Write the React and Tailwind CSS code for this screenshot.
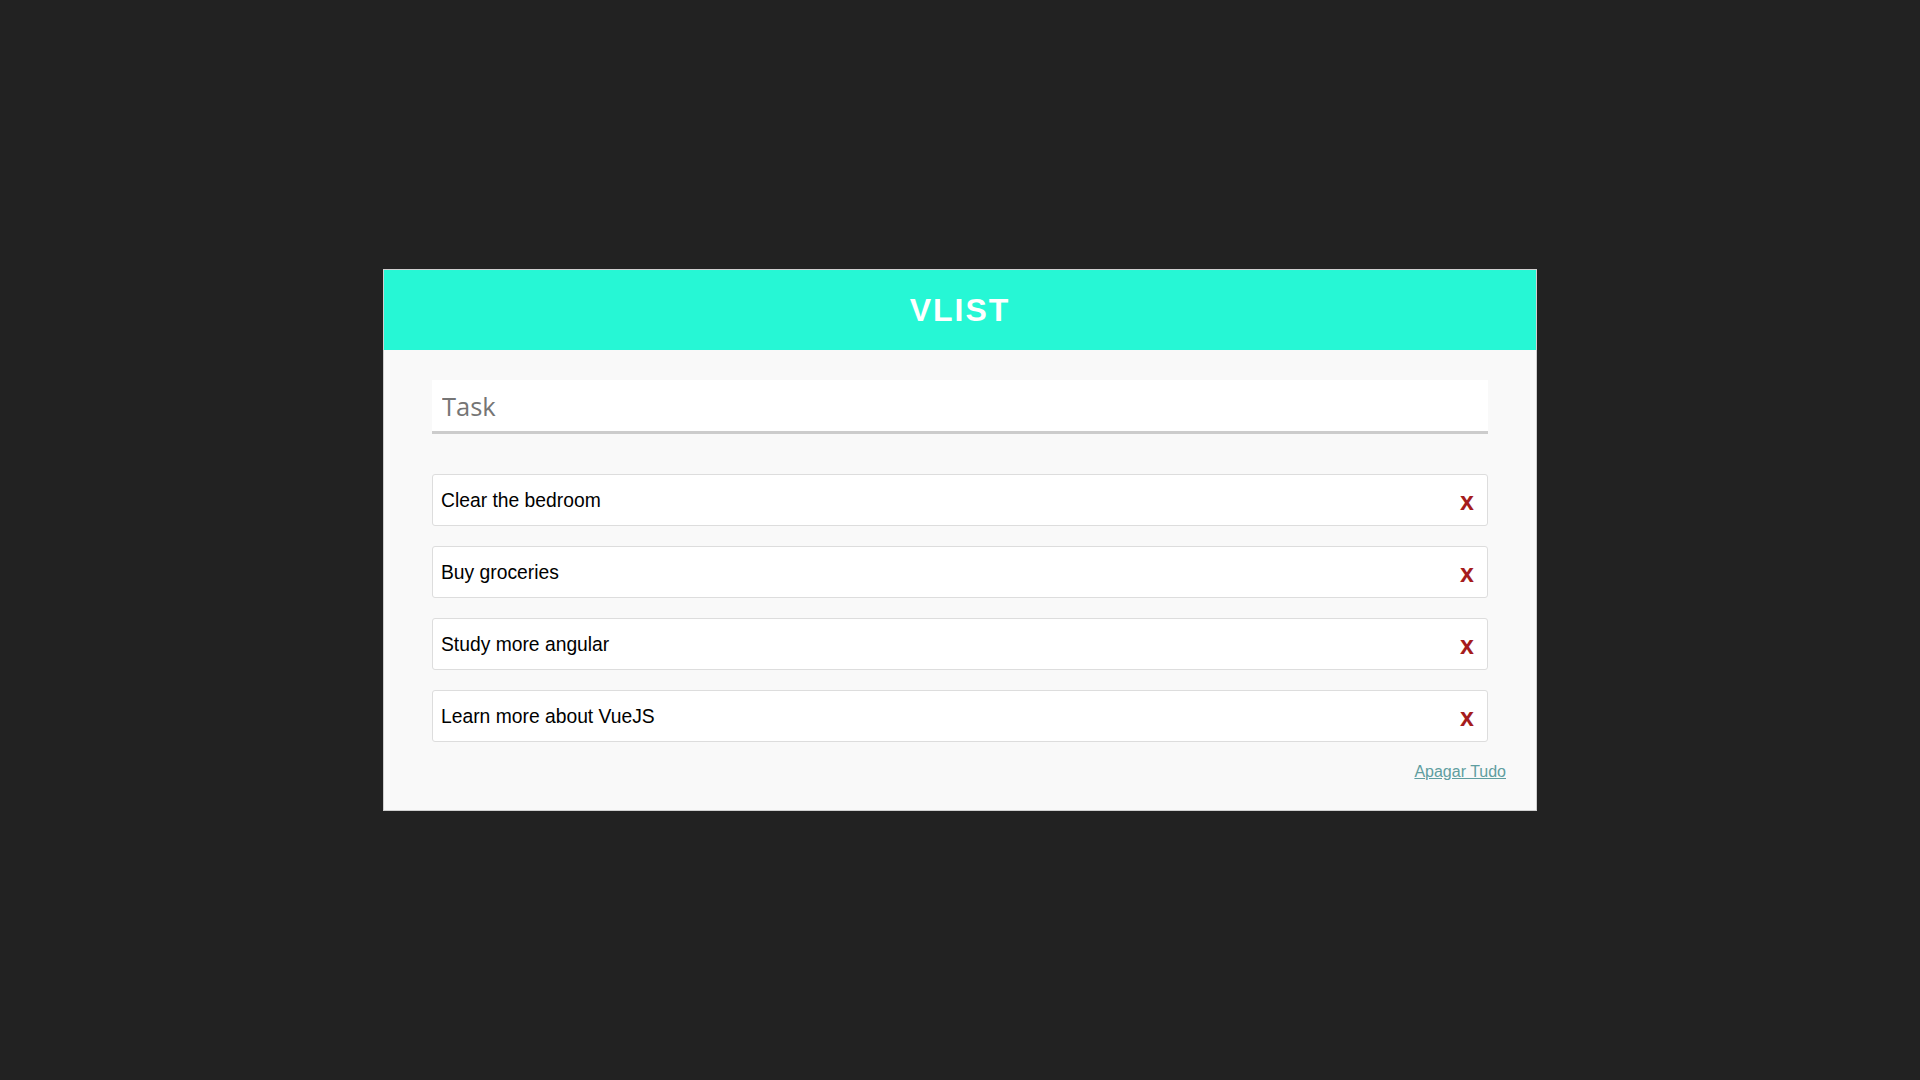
import React from "react";

const tasks = [
  "Clear the bedroom",
  "Buy groceries",
  "Study more angular",
  "Learn more about VueJS",
];

export default function App() {
  return (
    <div className="h-screen w-full bg-[#222222] flex items-center justify-center font-['Liberation_Sans',Arial,sans-serif]">
      <div className="w-[1154px] border border-[#cfcfcf] bg-[#f9f9f9] flex flex-col">
        <div className="h-[80px] bg-[#26f7d5] flex items-center justify-center">
          <h1 className="text-white font-bold text-[32px] tracking-[2px] leading-none">VLIST</h1>
        </div>
        <div className="px-[48px] pt-[30px] pb-[29px] flex flex-col">
          <input
            type="text"
            placeholder="Task"
            className="h-[54px] w-full bg-white border-0 border-b-[3px] border-[#cccccc] px-[10px] text-[25.5px] font-['Open_Sans',sans-serif] text-[#333] placeholder:text-[#757575] outline-none"
          />
          <ul className="mt-[40px] flex flex-col gap-[20px]">
            {tasks.map((t) => (
              <li
                key={t}
                className="h-[52px] bg-white border border-[#dddddd] rounded-[3px] pl-[8px] pr-[13px] flex items-center justify-between"
              >
                <span className="text-[19.3px] text-black mt-[2px]">{t}</span>
                <span className="text-[25px] font-bold text-[#a51c1c] leading-none mt-[2px]">x</span>
              </li>
            ))}
          </ul>
          <div className="mt-[21px] flex justify-end mr-[-18px]">
            <a href="#" className="text-[16px] leading-[18px] text-[#5f9ea0] underline">
              Apagar Tudo
            </a>
          </div>
        </div>
      </div>
    </div>
  );
}
